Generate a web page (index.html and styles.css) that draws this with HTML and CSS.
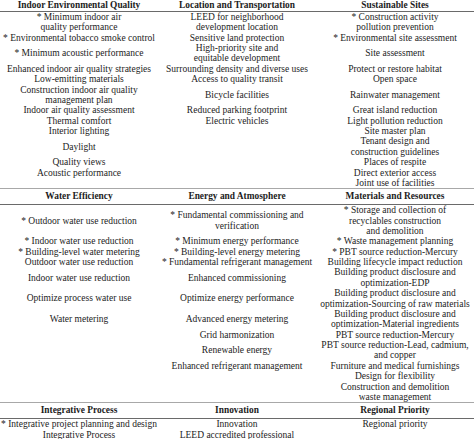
FILE: index.html
```html
<!DOCTYPE html>
<html lang="en">
<head>
<meta charset="utf-8">
<title>LEED credits</title>
<link rel="stylesheet" href="styles.css">
</head>
<body>
<div class="table">
  <div class="head first">
    <div>Indoor Environmental Quality</div>
    <div>Location and Transportation</div>
    <div>Sustainable Sites</div>
  </div>
  <div class="body">
    <div>* Minimum indoor air<br>quality performance<br>* Environmental tobacco smoke control</div>
    <div>LEED for neighborhood<br>development location<br>Sensitive land protection</div>
    <div>* Construction activity<br>pollution prevention<br>* Environmental site assessment</div>

    <div>* Minimum acoustic performance</div>
    <div>High-priority site and<br>equitable development</div>
    <div>Site assessment</div>

    <div>Enhanced indoor air quality strategies<br>Low-emitting materials</div>
    <div>Surrounding density and diverse uses<br>Access to quality transit</div>
    <div>Protect or restore habitat<br>Open space</div>

    <div>Construction indoor air quality<br>management plan</div>
    <div>Bicycle facilities</div>
    <div>Rainwater management</div>

    <div>Indoor air quality assessment<br>Thermal comfort</div>
    <div>Reduced parking footprint<br>Electric vehicles</div>
    <div>Great island reduction<br>Light pollution reduction</div>

    <div>Interior lighting</div>
    <div></div>
    <div>Site master plan</div>

    <div>Daylight</div>
    <div></div>
    <div>Tenant design and<br>construction guidelines</div>

    <div>Quality views<br>Acoustic performance</div>
    <div></div>
    <div>Places of respite<br>Direct exterior access</div>

    <div></div>
    <div></div>
    <div>Joint use of facilities</div>
  </div>

  <div class="head">
    <div>Water Efficiency</div>
    <div>Energy and Atmosphere</div>
    <div>Materials and Resources</div>
  </div>
  <div class="body">
    <div>* Outdoor water use reduction</div>
    <div>* Fundamental commissioning and<br>verification</div>
    <div>* Storage and collection of<br>recyclables construction<br>and demolition</div>

    <div>* Indoor water use reduction<br>* Building-level water metering<br>Outdoor water use reduction</div>
    <div>* Minimum energy performance<br>* Building-level energy metering<br>* Fundamental refrigerant management</div>
    <div>* Waste management planning<br>* PBT source reduction-Mercury<br>Building lifecycle impact reduction</div>

    <div>Indoor water use reduction</div>
    <div>Enhanced commissioning</div>
    <div>Building product disclosure and<br>optimization-EDP</div>

    <div>Optimize process water use</div>
    <div>Optimize energy performance</div>
    <div>Building product disclosure and<br>optimization-Sourcing of raw materials</div>

    <div>Water metering</div>
    <div>Advanced energy metering</div>
    <div>Building product disclosure and<br>optimization-Material ingredients</div>

    <div></div>
    <div>Grid harmonization</div>
    <div>PBT source reduction-Mercury</div>

    <div></div>
    <div>Renewable energy</div>
    <div>PBT source reduction-Lead, cadmium,<br>and copper</div>

    <div></div>
    <div>Enhanced refrigerant management</div>
    <div>Furniture and medical furnishings</div>

    <div></div>
    <div></div>
    <div>Design for flexibility<br>Construction and demolition<br>waste management</div>
  </div>

  <div class="head">
    <div>Integrative Process</div>
    <div>Innovation</div>
    <div>Regional Priority</div>
  </div>
  <div class="body">
    <div>* Integrative project planning and design</div>
    <div>Innovation</div>
    <div>Regional priority</div>

    <div>Integrative Process</div>
    <div>LEED accredited professional</div>
    <div></div>
  </div>
</div>
</body>
</html>
```
FILE: styles.css
```css
html, body {
  margin: 0;
  padding: 0;
  background: #ffffff;
}

body {
  font-family: "Liberation Serif", "Times New Roman", serif;
  color: #1c1c1c;
  width: 474px;
  height: 439px;
  overflow: hidden;
}

.table {
  width: 474px;
}

.head,
.body {
  display: grid;
  grid-template-columns: 158px 158px 158px;
}

.head {
  border-top: 1.5px solid #a8a8a8;
  border-bottom: 1px solid #6a6a6a;
  padding: 2px 0 2.5px;
  font-weight: bold;
  font-size: 9.4px;
  line-height: 10.4px;
  text-align: center;
}

.head.first {
  border-top: none;
  padding-top: 0;
  padding-bottom: 0.5px;
}

.body {
  font-size: 9.5px;
  line-height: 10.375px;
  text-align: center;
  align-items: center;
}

.head > div,
.body > div {
  white-space: nowrap;
}
```
